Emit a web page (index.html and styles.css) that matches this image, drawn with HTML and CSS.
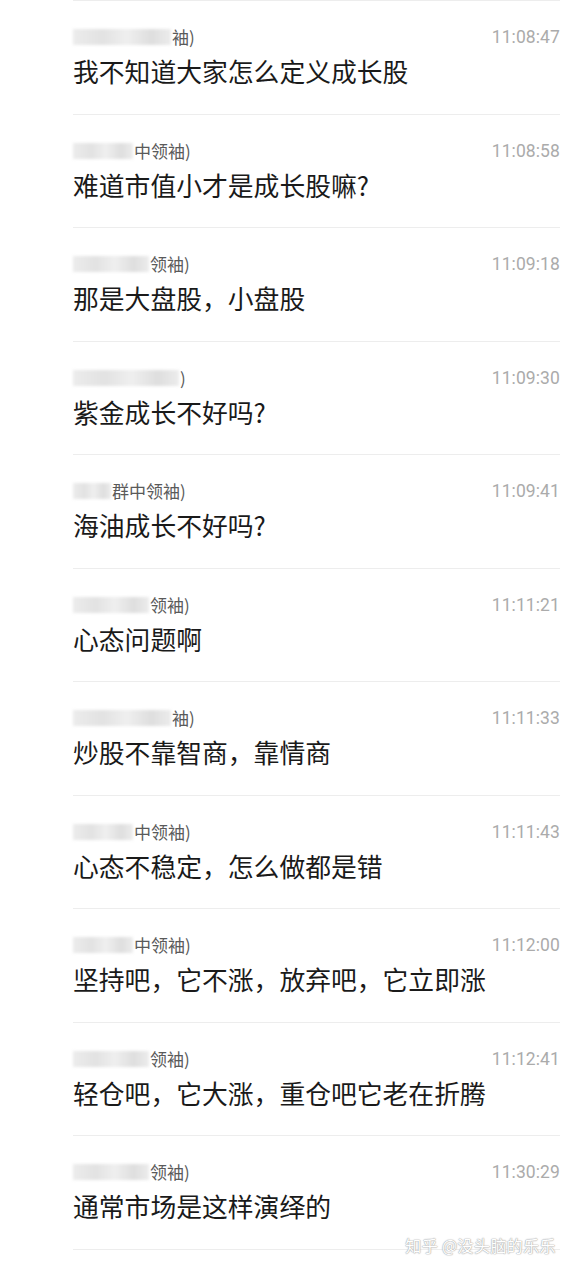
FILE: index.html
```html
<!DOCTYPE html>
<html lang="zh-CN">
<head>
    <meta charset="UTF-8">
    <meta name="viewport" content="width=device-width, initial-scale=1.0">
    <title>聊天记录</title>
    <link rel="stylesheet" href="styles.css">
</head>
<body>
    <div id="list">
        <div class="row">
            <div class="head"><span class="name"><i class="blur xl"></i>袖)</span><span class="time">11:08:47</span></div>
            <div class="msg">我不知道大家怎么定义成长股</div>
        </div>
        <div class="row">
            <div class="head"><span class="name"><i class="blur s"></i>中领袖)</span><span class="time">11:08:58</span></div>
            <div class="msg">难道市值小才是成长股嘛?</div>
        </div>
        <div class="row">
            <div class="head"><span class="name"><i class="blur m"></i>领袖)</span><span class="time">11:09:18</span></div>
            <div class="msg">那是大盘股，小盘股</div>
        </div>
        <div class="row">
            <div class="head"><span class="name"><i class="blur xxl"></i>)</span><span class="time">11:09:30</span></div>
            <div class="msg">紫金成长不好吗?</div>
        </div>
        <div class="row">
            <div class="head"><span class="name"><i class="blur xs"></i>群中领袖)</span><span class="time">11:09:41</span></div>
            <div class="msg">海油成长不好吗?</div>
        </div>
        <div class="row">
            <div class="head"><span class="name"><i class="blur m"></i>领袖)</span><span class="time">11:11:21</span></div>
            <div class="msg">心态问题啊</div>
        </div>
        <div class="row">
            <div class="head"><span class="name"><i class="blur xl"></i>袖)</span><span class="time">11:11:33</span></div>
            <div class="msg">炒股不靠智商，靠情商</div>
        </div>
        <div class="row">
            <div class="head"><span class="name"><i class="blur s"></i>中领袖)</span><span class="time">11:11:43</span></div>
            <div class="msg">心态不稳定，怎么做都是错</div>
        </div>
        <div class="row">
            <div class="head"><span class="name"><i class="blur s"></i>中领袖)</span><span class="time">11:12:00</span></div>
            <div class="msg">坚持吧，它不涨，放弃吧，它立即涨</div>
        </div>
        <div class="row">
            <div class="head"><span class="name"><i class="blur m"></i>领袖)</span><span class="time">11:12:41</span></div>
            <div class="msg">轻仓吧，它大涨，重仓吧它老在折腾</div>
        </div>
        <div class="row">
            <div class="head"><span class="name"><i class="blur m"></i>领袖)</span><span class="time">11:30:29</span></div>
            <div class="msg">通常市场是这样演绎的</div>
        </div>
        <div class="row last"></div>
    </div>
    <div class="watermark">知乎 @没头脑的乐乐</div>
</body>
</html>
```

FILE: styles.css
```css
body {
    margin: 0;
    background: #ffffff;
    font-family: "Noto Sans CJK SC", "Noto Sans", sans-serif;
    position: relative;
    height: 1269px;
    overflow: hidden;
}
#list {
    margin: 0 9px 0 73px;
}
.row {
    border-top: 1px solid #ededed;
    padding: 25px 0 26.5px;
}
.row.last {
    padding: 0;
}
.head {
    display: flex;
    justify-content: space-between;
    align-items: center;
    height: 22px;
}
.name {
    display: flex;
    align-items: center;
    font-size: 17px;
    color: #5a5a5a;
    line-height: 22px;
}
.blur {
    display: inline-block;
    height: 16px;
    background: linear-gradient(90deg, #ececec 0%, #e2e2e2 30%, #efefef 55%, #dedede 80%, #ececec 100%);
    filter: blur(1.5px);
    margin-right: 1px;
}
.blur.xs { width: 38px; }
.blur.s { width: 60px; }
.blur.m { width: 76px; }
.blur.xl { width: 98px; }
.blur.xxl { width: 106px; }
.time {
    font-family: Roboto, "Noto Sans", sans-serif;
    font-size: 17.5px;
    color: #ababab;
    letter-spacing: 0.1px;
}
.msg {
    margin-top: 7px;
    font-size: 25.8px;
    line-height: 32px;
    color: #1a1a1a;
    white-space: nowrap;
}
.watermark {
    position: absolute;
    right: 13px;
    top: 1233px;
    font-size: 16px;
    color: #ffffff;
    text-shadow: 0 0 1px #a8a8a8, 0 0 1px #a8a8a8, 0 0 2px #c8c8c8;
    letter-spacing: 0.4px;
}
```
